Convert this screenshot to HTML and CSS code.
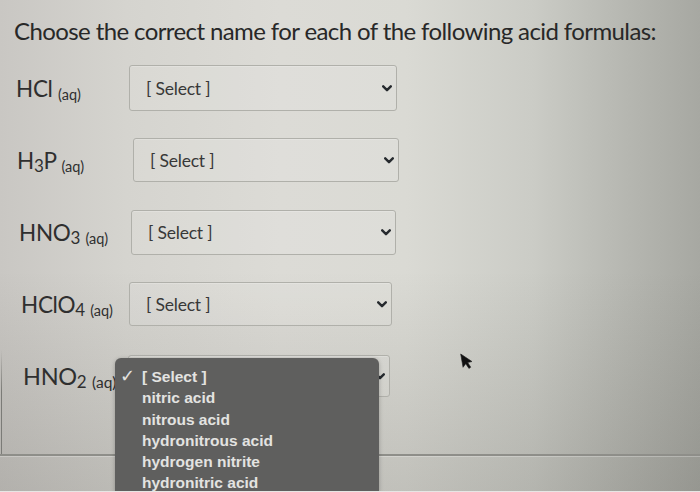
FILE: index.html
```html
<!DOCTYPE html>
<html lang="en">
<head>
<meta charset="utf-8">
<title>Acid names</title>
<link rel="stylesheet" href="styles.css">
</head>
<body>
<div class="screen">
  <div class="question">
    <h1 class="prompt">Choose the correct name for each of the following acid formulas:</h1>
    <div class="rows">
      <div class="row r1">
        <div class="formula">HCl <span class="aq">(aq)</span></div>
        <div class="select"><span class="val">[ Select ]</span><span class="chev"><svg viewBox="0 0 10 7" width="10" height="7"><path d="M1.2 1.3 L5 5.2 L8.8 1.3" fill="none" stroke="#262a2e" stroke-width="2.4" stroke-linecap="round" stroke-linejoin="round"/></svg></span></div>
      </div>
      <div class="row r2">
        <div class="formula">H<span class="sub">3</span>P <span class="aq">(aq)</span></div>
        <div class="select"><span class="val">[ Select ]</span><span class="chev"><svg viewBox="0 0 10 7" width="10" height="7"><path d="M1.2 1.3 L5 5.2 L8.8 1.3" fill="none" stroke="#262a2e" stroke-width="2.4" stroke-linecap="round" stroke-linejoin="round"/></svg></span></div>
      </div>
      <div class="row r3">
        <div class="formula">HNO<span class="sub">3</span> <span class="aq">(aq)</span></div>
        <div class="select"><span class="val">[ Select ]</span><span class="chev"><svg viewBox="0 0 10 7" width="10" height="7"><path d="M1.2 1.3 L5 5.2 L8.8 1.3" fill="none" stroke="#262a2e" stroke-width="2.4" stroke-linecap="round" stroke-linejoin="round"/></svg></span></div>
      </div>
      <div class="row r4">
        <div class="formula">HClO<span class="sub">4</span> <span class="aq">(aq)</span></div>
        <div class="select"><span class="val">[ Select ]</span><span class="chev"><svg viewBox="0 0 10 7" width="10" height="7"><path d="M1.2 1.3 L5 5.2 L8.8 1.3" fill="none" stroke="#262a2e" stroke-width="2.4" stroke-linecap="round" stroke-linejoin="round"/></svg></span></div>
      </div>
      <div class="row r5">
        <div class="formula">HNO<span class="sub">2</span> <span class="aq">(aq)</span></div>
        <div class="select open"><span class="val">[ Select ]</span><span class="chev"><svg viewBox="0 0 10 7" width="10" height="7"><path d="M1.2 1.3 L5 5.2 L8.8 1.3" fill="none" stroke="#262a2e" stroke-width="2.4" stroke-linecap="round" stroke-linejoin="round"/></svg></span></div>
        <ul class="menu">
          <li class="opt checked"><span class="tick">✓</span><span>[ Select ]</span></li>
          <li class="opt"><span class="tick"></span><span>nitric acid</span></li>
          <li class="opt"><span class="tick"></span><span>nitrous acid</span></li>
          <li class="opt"><span class="tick"></span><span>hydronitrous acid</span></li>
          <li class="opt"><span class="tick"></span><span>hydrogen nitrite</span></li>
          <li class="opt"><span class="tick"></span><span>hydronitric acid</span></li>
        </ul>
      </div>
    </div>
  </div>
  <svg class="cursor" viewBox="0 0 12 18" width="12" height="18"><path d="M1 1 L1 14.5 L4.3 11.4 L6.6 16.6 L8.6 15.7 L6.4 10.6 L10.8 10.4 Z" fill="#111" stroke="#222" stroke-width="0.6" stroke-linejoin="round"/></svg>
  <div class="edge"></div>
</div>
</body>
</html>
```

FILE: styles.css
```css
html, body {
  margin: 0;
  padding: 0;
  width: 700px;
  height: 492px;
  overflow: hidden;
}

body {
  font-family: Lato, "Liberation Sans", sans-serif;
  color: #2e2e2e;
}

.screen {
  position: relative;
  width: 700px;
  height: 492px;
  overflow: hidden;
  background:
    linear-gradient(to bottom, rgba(0,0,0,0) 0%, rgba(0,0,0,0) 55%, rgba(60,58,52,0.16) 100%),
    linear-gradient(to right, #c9c7c3 0%, #d5d4cf 18%, #dcdbd6 40%, #dadad4 58%, #cbccc6 76%, #b5b6b0 90%, #a7a8a2 100%);
}

.question {
  position: relative;
  height: 454px;
  border-bottom: 2px solid #8e8e89;
  box-shadow: 0 1px 0 rgba(255,255,255,0.25);
}

.question::before {
  content: "";
  position: absolute;
  left: 1px;
  top: 350px;
  bottom: 0;
  width: 1px;
  background: linear-gradient(to bottom, rgba(110,110,105,0), #7b7b77 40%);
}

.prompt {
  margin: 0;
  padding: 16px 0 0 14px;
  font-family: Lato, "Liberation Sans", sans-serif;
  font-weight: 400;
  font-size: 24px;
  line-height: 30px;
  color: #282828;
  letter-spacing: -0.6px;
  white-space: nowrap;
}

.rows {
  display: flex;
  flex-direction: column;
  gap: 28px;
  padding-top: 20px;
}

.row {
  position: relative;
  display: flex;
  align-items: center;
  height: 44px;
}

.formula {
  box-sizing: border-box;
  font-size: 22.5px;
  color: #2f2f2f;
  white-space: nowrap;
  letter-spacing: -0.3px;
}

.sub {
  font-size: 17px;
  position: relative;
  top: 3px;
}

.aq {
  font-size: 14.5px;
  position: relative;
  top: 3px;
  letter-spacing: 0;
}

.r1 .formula { padding-left: 16px; width: 129px; }
.r2 .formula { padding-left: 17px; width: 133px; }
.r3 .formula { padding-left: 19px; width: 131px; }
.r4 .formula { padding-left: 21px; width: 129px; }
.r5 .formula { padding-left: 23px; width: 128px; font-size: 23.5px; }
.r5 .formula .aq { font-size: 15.5px; }

.r1 .select { width: 268px; height: 46px; }
.r2 .select { width: 266px; }
.r3 .select { width: 265px; height: 45px; }
.r4 .select { width: 263px; }
.r5 .select { width: 262px; height: 42px; }

.select {
  box-sizing: border-box;
  height: 44px;
  display: flex;
  align-items: center;
  justify-content: space-between;
  padding: 0 4px 0 16px;
  border: 1px solid #b0b0aa;
  border-radius: 3px;
  background: rgba(255,255,255,0.10);
  box-shadow: inset 0 1px 0 rgba(255,255,255,0.2);
}

.val {
  font-size: 17.5px;
  color: #383838;
  letter-spacing: -0.2px;
}

.open .val {
  visibility: hidden;
}

.chev {
  display: flex;
  align-items: center;
}

.menu {
  position: absolute;
  left: 115px;
  top: 4px;
  width: 264px;
  height: 134px;
  margin: 0;
  padding: 7px 0 0 0;
  list-style: none;
  box-sizing: border-box;
  background: #5f5f5e;
  border-radius: 6px 6px 0 0;
  box-shadow: 0 1px 4px rgba(0,0,0,0.25);
  overflow: hidden;
}

.opt {
  display: flex;
  align-items: baseline;
  font-family: "Liberation Sans", Arial, sans-serif;
  font-weight: 700;
  font-size: 15.5px;
  line-height: 21.3px;
  color: #e3e3e1;
  white-space: nowrap;
}

.tick {
  box-sizing: border-box;
  width: 27px;
  padding-left: 5px;
  flex: none;
  font-size: 18px;
  font-family: "DejaVu Sans", sans-serif;
  font-weight: 400;
}

.cursor {
  position: absolute;
  left: 461px;
  top: 352px;
  transform: rotate(-10deg);
}

.edge {
  position: absolute;
  left: 0;
  right: 0;
  bottom: 0;
  height: 1px;
  background: #e6e6e4;
}
```
